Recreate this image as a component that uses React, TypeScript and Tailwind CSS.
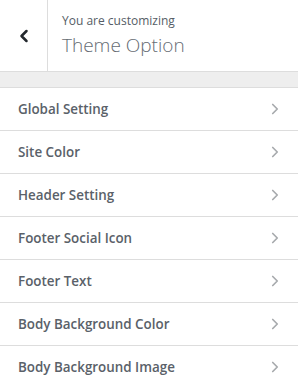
import { ChevronLeft, ChevronRight } from "lucide-react";

const sections = [
  "Global Setting",
  "Site Color",
  "Header Setting",
  "Footer Social Icon",
  "Footer Text",
  "Body Background Color",
  "Body Background Image",
];

export default function App() {
  return (
    <div className="h-[386px] w-[298px] overflow-hidden bg-white font-['Open_Sans',sans-serif] text-[#555d66]">
      <div className="flex h-[72px] border-b border-[#dddddd]">
        <div className="flex w-[48px] shrink-0 items-center justify-center border-r border-[#dddddd] text-[#23282d]">
          <ChevronLeft className="h-[20px] w-[20px]" strokeWidth={3} />
        </div>
        <div className="flex flex-col pl-[14px] pt-[12px]">
          <span className="text-[12px] leading-[18px]">You are customizing</span>
          <span className="mt-[2px] text-[19px] font-light leading-[26px] text-[#666c73]">Theme Option</span>
        </div>
      </div>
      <div className="h-[16px] border-b border-[#dddddd] bg-[#eeeeee]" />
      <ul>
        {sections.map((s) => (
          <li
            key={s}
            className="flex h-[43px] items-center justify-between border-b border-[#dddddd] pl-[18px] pr-[14px]"
          >
            <span className="text-[13.4px] font-semibold text-[#5a6169]">{s}</span>
            <ChevronRight className="h-[18px] w-[18px] text-[#a7aaad]" strokeWidth={2.25} />
          </li>
        ))}
      </ul>
    </div>
  );
}
